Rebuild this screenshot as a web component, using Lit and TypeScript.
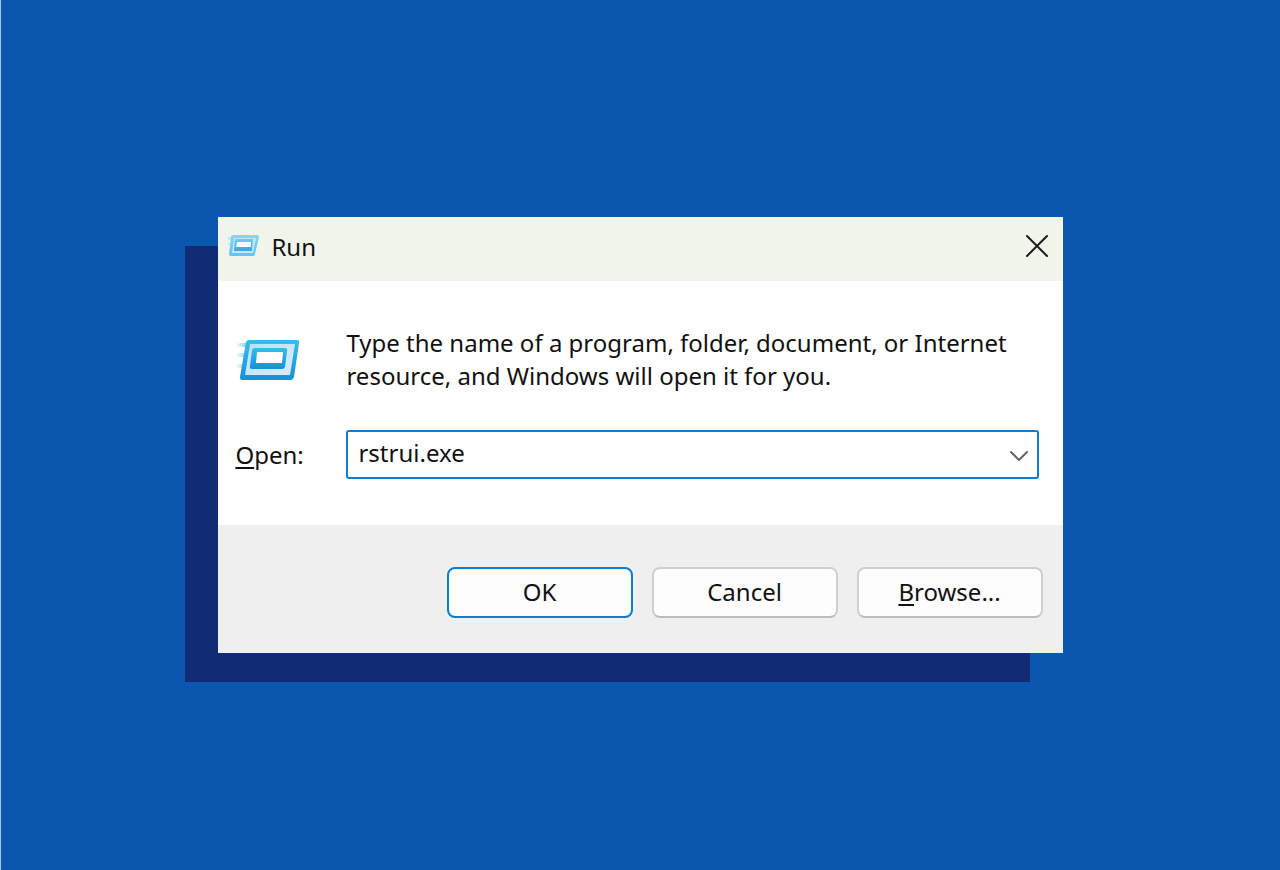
import { LitElement, html, css, svg } from "lit";
import { customElement, property, state } from "lit/decorators.js";

@customElement("run-icon")
class RunIcon extends LitElement {
  static styles = css`
    :host { display: block; flex: none; }
    .glyph { display: block; width: 100%; height: 100%; }
  `;

  @property({ type: Boolean }) small = false;

  render() {
    const large = svg`
      <defs>
        <linearGradient id="frame" x1="0" y1="0" x2="0" y2="1">
          <stop offset="0" stop-color="#37bdec" /><stop offset="1" stop-color="#1590da" />
        </linearGradient>
        <linearGradient id="panel" x1="0" y1="0" x2="1" y2="1">
          <stop offset="0" stop-color="#b5e2f8" /><stop offset="1" stop-color="#dcebfa" />
        </linearGradient>
        <linearGradient id="trail" x1="0" y1="0" x2="1" y2="0">
          <stop offset="0" stop-color="#5cc4ee" stop-opacity="0.1" /><stop offset="1" stop-color="#3bb2e8" stop-opacity="0.8" />
        </linearGradient>
      </defs>
      <path d="M0 3h12v4H0zM0 13h10v4H0zM0 24h8v4H0z" fill="url(#trail)" />
      <path d="M12 0h48q3 0 2 3l-5 34q-1 3-3 3H5q-2 0-2-3L9 2q1-2 3-2z" fill="url(#frame)" />
      <path d="M13 4h45l-5 31H8z" fill="url(#panel)" />
      <path d="M18 8h30q3 0 2 3l-2 16q-1 2-3 2H15q-3 0-2-3l2-16q1-2 3-2z" fill="url(#frame)" />
      <path d="M20 12h26l-1 11H19z" fill="#fff" />`;
    const compact = svg`
      <defs>
        <linearGradient id="frame" x1="0" y1="0" x2="0" y2="1">
          <stop offset="0" stop-color="#7ed8f8" /><stop offset="1" stop-color="#68c2ee" />
        </linearGradient>
        <linearGradient id="slot" x1="0" y1="0" x2="0" y2="1">
          <stop offset="0" stop-color="#6cccf5" /><stop offset="1" stop-color="#3aa5e6" />
        </linearGradient>
      </defs>
      <path d="M0 2h6v3H0zM0 8h5v2H0z" fill="#aee4f8" opacity="0.7" />
      <path d="M5 0h24q2 0 2 2l-4 17q0 2-2 2H3q-2 0-2-2L3 2q0-2 2-2z" fill="url(#frame)" />
      <path d="M6 3h22l-3 15H4z" fill="#c0e8fa" />
      <path d="M7 4h18l-1 12H6z" fill="url(#slot)" />
      <path d="M9 7h14v5H8z" fill="#f4fcff" />`;
    return html`<svg class="glyph" viewBox=${this.small ? "0 0 31 21" : "0 0 63 40"} aria-hidden="true">
      ${this.small ? compact : large}
    </svg>`;
  }
}

@customElement("app-root")
class AppRoot extends LitElement {
  static styles = css`
    :host {
      display: grid;
      place-items: center;
      box-sizing: border-box;
      min-height: 100vh;
      background: #0b57af;
      border-left: 1px solid #a9c3e4;
      font-family: "Noto Sans", "Open Sans", sans-serif;
      font-size: 24px;
      line-height: 33px;
      color: #111;
    }
    .dialog {
      box-sizing: border-box;
      width: 66%;
      background: #fff;
      box-shadow: -33px 29px 0 #122b75;
    }
    .titlebar {
      display: flex;
      align-items: center;
      gap: 12px;
      padding: 10px 13px 10px 10px;
      background: #f1f4eb;
    }
    .title { flex: 1; margin: 0; padding: 3px 0 8px; font-size: 24px; font-weight: 400; }
    .small-icon { width: 31px; height: 21px; margin-bottom: 7px; }
    .close {
      display: grid;
      place-items: center;
      width: 26px;
      height: 26px;
      margin-bottom: 7px;
      padding: 0;
      border: 0;
      background: none;
    }
    .body {
      display: grid;
      grid-template-columns: 111px 1fr;
      row-gap: 38px;
      align-items: center;
      padding: 45px 24px 46px 17px;
    }
    .large-icon { width: 63px; height: 40px; margin: 2px 2px 0; }
    .message { margin: 0; }
    .key { text-decoration: underline; text-decoration-thickness: 2px; text-underline-offset: 3px; }
    .combo {
      display: flex;
      align-items: center;
      border: 2px solid #0c7cd5;
      border-radius: 3px;
      background: #fff;
    }
    .field {
      flex: 1;
      min-width: 0;
      height: 45px;
      box-sizing: border-box;
      padding: 0 10px 4px;
      border: 0;
      outline: 0;
      background: none;
      font: inherit;
      color: inherit;
    }
    .arrow {
      display: grid;
      place-items: center;
      width: 35px;
      height: 45px;
      padding: 2px 0 0;
      border: 0;
      background: none;
    }
    .footer {
      display: flex;
      justify-content: flex-end;
      gap: 19px;
      padding: 42px 20px 35px;
      background: #efefef;
    }
    .button {
      width: 186px;
      padding: 6px 0 8px;
      border: 2px solid #cfcfcf;
      border-bottom-color: #bdbdbd;
      border-radius: 8px;
      background: #fdfdfd;
      font: inherit;
      color: inherit;
    }
    .button.primary { border-color: #0c7cd5; }
  `;

  @state() private command = "rstrui.exe";

  private onInput(e: Event) {
    this.command = (e.target as HTMLInputElement).value;
  }

  render() {
    return html`
      <section class="dialog" role="dialog" aria-labelledby="title">
        <header class="titlebar">
          <run-icon class="small-icon" small></run-icon>
          <h1 class="title" id="title">Run</h1>
          <button class="close" type="button" aria-label="Close">
            <svg width="24" height="24" viewBox="0 0 24 24" fill="none" stroke="#1c1c1c" stroke-width="2" stroke-linecap="round">
              <path d="M2 2l20 20M22 2L2 22" />
            </svg>
          </button>
        </header>
        <div class="body">
          <run-icon class="large-icon"></run-icon>
          <p class="message">
            Type the name of a program, folder, document, or Internet resource, and Windows will open it for you.
          </p>
          <label for="command"><span class="key">O</span>pen:</label>
          <div class="combo">
            <input class="field" id="command" type="text" spellcheck="false" .value=${this.command} @input=${this.onInput} />
            <button class="arrow" type="button" aria-label="Recent commands">
              <svg width="20" height="12" viewBox="0 0 20 12" fill="none" stroke="#666" stroke-width="2" stroke-linecap="round" stroke-linejoin="round">
                <path d="M2 2l8 8 8-8" />
              </svg>
            </button>
          </div>
        </div>
        <footer class="footer">
          <button class="button primary" type="button">OK</button>
          <button class="button" type="button">Cancel</button>
          <button class="button" type="button"><span class="key">B</span>rowse...</button>
        </footer>
      </section>
    `;
  }
}
